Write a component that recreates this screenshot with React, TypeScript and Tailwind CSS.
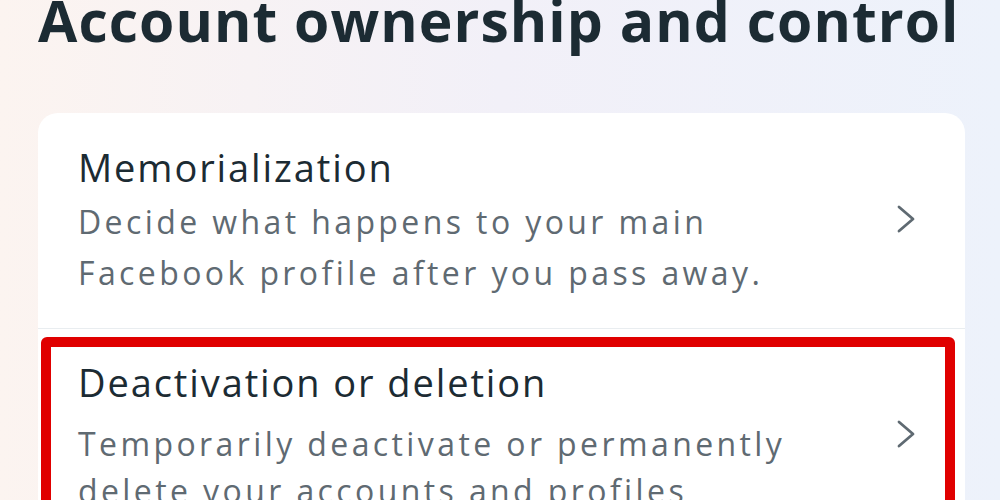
const font = { fontFamily: '"Open Sans", "Noto Sans", sans-serif' }

function Chevron() {
  return (
    <svg width="24" height="30" viewBox="0 0 24 30" fill="none" className="mt-[61px] shrink-0 text-[#5f6a72]">
      <path d="M5 3 L19 15 L5 27" stroke="currentColor" strokeWidth="2.8" strokeLinecap="round" strokeLinejoin="round" />
    </svg>
  )
}

export default function App() {
  return (
    <div
      className="h-[500px] w-[1000px] overflow-hidden bg-linear-to-r from-[#fcf4f0] via-[#f2f0f8] to-[#edf2fb] text-[#1c2b33]"
      style={font}
    >
      <div className="pl-[38px] pr-[35px]">
        <h1 className="-mt-[15px] text-[57px] font-bold leading-[70px] tracking-[1.05px] whitespace-nowrap">
          Account ownership and control
        </h1>

        <div className="mt-[58px] rounded-[20px] bg-white">
          {/* Memorialization */}
          <div className="flex items-start pl-[40px] pr-[47px] pt-[30px] pb-[30px]">
            <div className="flex-1">
              <div className="text-[38px] font-medium leading-[48px] tracking-[1.9px]">Memorialization</div>
              <div className="mt-[5px] text-[32px] leading-[51px] tracking-[3.4px] text-[#5f6a72]">
                Decide what happens to your main
                <br />
                Facebook profile after you pass away.
              </div>
            </div>
            <Chevron />
          </div>

          <div className="h-px bg-[#e9edf0]" />

          {/* Deactivation, with red annotation box */}
          <div className="ml-[3px] mr-[10px] mt-[8px] rounded-[6px] border-[10px] border-[#e00000]">
            <div className="flex items-start pl-[27px] pr-[27px] pt-[11px] pb-[20px]">
              <div className="flex-1">
                <div className="text-[38px] font-medium leading-[48px] tracking-[1.9px]">Deactivation or deletion</div>
                <div className="mt-[14px] text-[32px] leading-[47px] tracking-[3.4px] text-[#5f6a72]">
                  Temporarily deactivate or permanently
                  <br />
                  delete your accounts and profiles
                </div>
              </div>
              <Chevron />
            </div>
          </div>
        </div>
      </div>
    </div>
  )
}
